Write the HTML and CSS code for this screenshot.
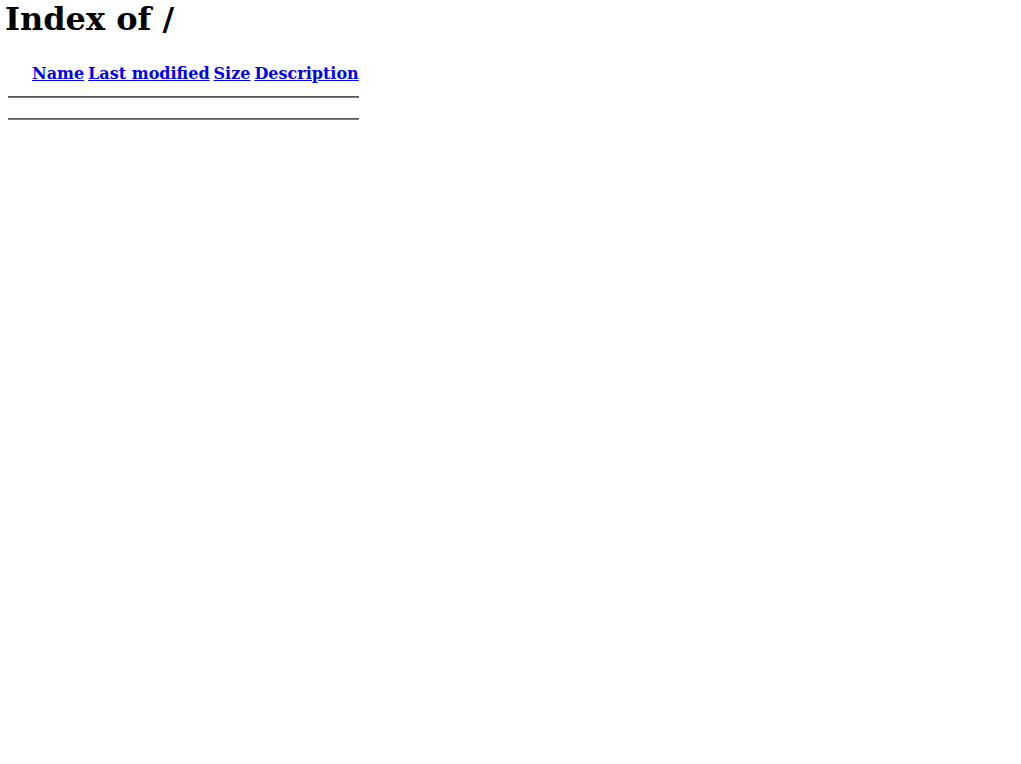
FILE: index.html
```html
<!DOCTYPE html>
<html lang="en">
<head>
<meta charset="utf-8">
<title>Index of /</title>
<link rel="stylesheet" href="styles.css">
</head>
<body class="page">
<h1 class="title">Index of /</h1>
<table class="listing">
<thead>
<tr><th class="icon-cell"></th><th><a href="?C=N;O=D">Name</a></th><th><a href="?C=M;O=A">Last modified</a></th><th><a href="?C=S;O=A">Size</a></th><th><a href="?C=D;O=A">Description</a></th></tr>
</thead>
<tbody>
<tr><td colspan="5"><hr class="rule"></td></tr>
<tr><td colspan="5"><hr class="rule"></td></tr>
</tbody>
</table>
</body>
</html>
```

FILE: styles.css
```css
.page {
  margin: 0 5px;
  background: #fff;
  color: #000;
  font-family: "DejaVu Serif", serif;
  font-size: 16px;
}

.title {
  margin: 0 0 21px;
  font-size: 32px;
  line-height: 38px;
}

.listing {
  border-spacing: 2px;
}

.listing th,
.listing td {
  padding: 1px;
}

.listing th {
  height: 22px;
}

.listing .icon-cell {
  width: 20px;
}

.listing a {
  color: #00e;
}

.rule {
  margin: 8px 0;
  border: 0;
  border-top: 1px solid #555;
  border-bottom: 1px solid #808080;
}
```
